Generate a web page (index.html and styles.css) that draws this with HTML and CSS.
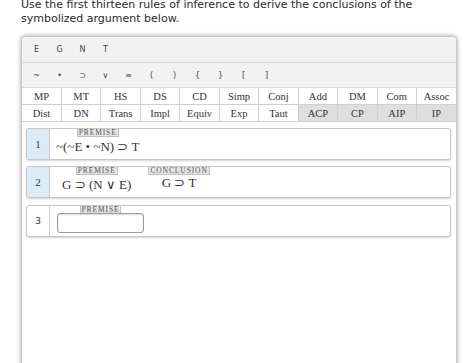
FILE: index.html
```html
<!DOCTYPE html>
<html>
<head>
<meta charset="utf-8">
<link rel="stylesheet" href="styles.css">
</head>
<body>
<p class="prompt">Use the first thirteen rules of inference to derive the conclusions of the symbolized argument below.</p>
<div class="panel">
  <div class="bar vars">
    <span class="key">E</span><span class="key">G</span><span class="key">N</span><span class="key">T</span>
  </div>
  <div class="bar syms">
    <span class="key">~</span><span class="key">•</span><span class="key">⊃</span><span class="key">∨</span><span class="key">≡</span><span class="key">(</span><span class="key">)</span><span class="key">{</span><span class="key">}</span><span class="key">[</span><span class="key">]</span>
  </div>
  <table class="rules">
    <tr><td>MP</td><td>MT</td><td>HS</td><td>DS</td><td>CD</td><td>Simp</td><td>Conj</td><td>Add</td><td>DM</td><td>Com</td><td>Assoc</td></tr>
    <tr><td>Dist</td><td>DN</td><td>Trans</td><td>Impl</td><td>Equiv</td><td>Exp</td><td>Taut</td><td class="alt">ACP</td><td class="alt">CP</td><td class="alt">AIP</td><td class="alt">IP</td></tr>
  </table>
  <div class="proof">
    <div class="line">
      <div class="num given">1</div>
      <div class="content c1">
        <div class="group"><span class="tag">PREMISE</span><span class="formula">~(~E • ~N) ⊃ T</span></div>
      </div>
    </div>
    <div class="line">
      <div class="num given">2</div>
      <div class="content c2">
        <div class="group"><span class="tag">PREMISE</span><span class="formula">G ⊃ (N ∨ E)</span></div>
        <div class="group concl"><span class="tag">CONCLUSION</span><span class="formula">G ⊃ T</span></div>
      </div>
    </div>
    <div class="line">
      <div class="num open">3</div>
      <div class="content c3">
        <div class="group"><span class="tag">PREMISE</span><span class="entry"></span></div>
      </div>
    </div>
  </div>
</div>
</body>
</html>
```
FILE: styles.css
```css
html, body {
  margin: 0;
  padding: 0;
  background: #fff;
  overflow: hidden;
}
body {
  font-family: "DejaVu Sans", Verdana, sans-serif;
  color: #222;
}
.prompt {
  margin: -2px 0 0 21px;
  width: 420px;
  font-size: 11px;
  line-height: 14px;
  color: #2a2a2a;
}
.panel {
  margin: 10px 0 0 21px;
  width: 434px;
  height: 340px;
  border: 1px solid #c9c9c9;
  border-bottom: none;
  border-radius: 4px 4px 0 0;
  background: #fff;
  box-shadow: 0 0 5px rgba(0, 0, 0, 0.35);
}
.bar {
  display: flex;
  align-items: center;
  background: #f2f2f2;
  border-bottom: 1px solid #d9d9d9;
  padding-left: 3px;
  font-size: 8px;
  color: #444;
}
.vars {
  height: 25px;
  border-radius: 4px 4px 0 0;
}
.syms {
  height: 24px;
}
.key {
  width: 23px;
  text-align: center;
}
.rules {
  border-collapse: collapse;
  width: 434px;
  table-layout: fixed;
  font-family: "Liberation Serif", "Times New Roman", serif;
  font-size: 10.5px;
  color: #333;
}
.rules td {
  height: 16px;
  padding: 0;
  text-align: center;
  border: 1px solid #d0d0d0;
  border-top: none;
}
.rules td:first-child {
  border-left: none;
}
.rules td:last-child {
  border-right: none;
}
.rules td.alt {
  background: #dedede;
}
.proof {
  display: flex;
  flex-direction: column;
  gap: 6px;
  padding: 6px 5px 0 4px;
}
.line {
  display: flex;
  height: 30px;
  border: 1px solid #c6c6c6;
  border-radius: 3px;
  box-shadow: 0 1px 2px rgba(0, 0, 0, 0.18);
  background: #fff;
  overflow: hidden;
}
.line:nth-child(3) {
  margin-top: 1px;
}
.num {
  width: 22px;
  border-right: 1px solid #cfcfcf;
  display: flex;
  align-items: center;
  justify-content: center;
  font-family: "Liberation Serif", serif;
  font-size: 11px;
  color: #333;
}
.num.given {
  background: #dcebf8;
}
.num.open {
  font-family: "DejaVu Sans", sans-serif;
  font-size: 9px;
}
.content {
  display: flex;
  align-items: flex-start;
  padding-left: 6px;
}
.c2 {
  padding-left: 12px;
  gap: 17px;
}
.c3 {
  padding-left: 7px;
}
.group {
  display: flex;
  flex-direction: column;
  align-items: center;
}
.tag {
  font-family: "Liberation Serif", serif;
  font-size: 7.5px;
  line-height: 7px;
  letter-spacing: 0.9px;
  color: #555;
  background: #e6e6e6;
  border: 1px solid #bdbdbd;
  border-top: none;
  padding: 0 1px;
}
.formula {
  font-family: "Liberation Serif", serif;
  font-size: 13px;
  line-height: 15px;
  margin-top: 2px;
  color: #333;
  white-space: nowrap;
}
.concl .formula {
  margin-top: 0;
}
.entry {
  display: block;
  width: 85px;
  height: 18px;
  margin-top: -1px;
  border: 1px solid #9a9a9a;
  border-radius: 3px;
  box-shadow: inset 0 1px 2px rgba(0, 0, 0, 0.15);
  background: #fff;
}
```
